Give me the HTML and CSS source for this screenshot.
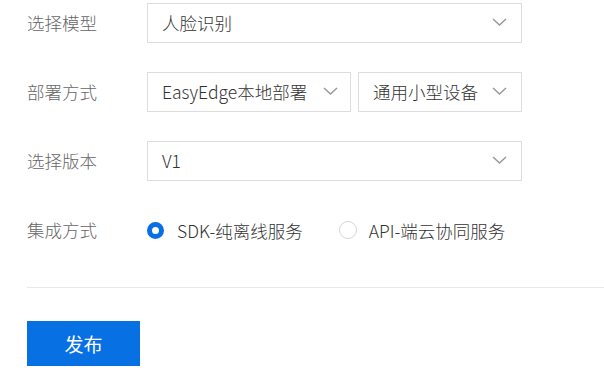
FILE: index.html
```html
<!DOCTYPE html>
<html lang="zh-CN">
<head>
    <meta charset="UTF-8">
    <title>发布模型</title>
    <link rel="stylesheet" href="styles.css">
</head>
<body>
    <div class="publish-form">
        <div class="form-row">
            <div class="form-label">选择模型</div>
            <div class="select select-wide">
                <span>人脸识别</span>
                <svg class="arrow" width="15" height="8" viewBox="0 0 15 8"><path d="M1 1 L7.5 7 L14 1" fill="none" stroke="#999" stroke-width="1.5"/></svg>
            </div>
        </div>
        <div class="form-row">
            <div class="form-label">部署方式</div>
            <div class="select select-mid">
                <span>EasyEdge本地部署</span>
                <svg class="arrow" width="15" height="8" viewBox="0 0 15 8"><path d="M1 1 L7.5 7 L14 1" fill="none" stroke="#999" stroke-width="1.5"/></svg>
            </div>
            <div class="select select-small">
                <span>通用小型设备</span>
                <svg class="arrow" width="15" height="8" viewBox="0 0 15 8"><path d="M1 1 L7.5 7 L14 1" fill="none" stroke="#999" stroke-width="1.5"/></svg>
            </div>
        </div>
        <div class="form-row">
            <div class="form-label">选择版本</div>
            <div class="select select-wide">
                <span>V1</span>
                <svg class="arrow" width="15" height="8" viewBox="0 0 15 8"><path d="M1 1 L7.5 7 L14 1" fill="none" stroke="#999" stroke-width="1.5"/></svg>
            </div>
        </div>
        <div class="form-row">
            <div class="form-label">集成方式</div>
            <label class="radio checked"><span class="radio-dot"></span>SDK-纯离线服务</label>
            <label class="radio"><span class="radio-dot"></span>API-端云协同服务</label>
        </div>
        <div class="divider"></div>
        <button class="btn-primary">发布</button>
    </div>
</body>
</html>
```

FILE: styles.css
```css
html, body {
    margin: 0;
    padding: 0;
    background: #fff;
}

body {
    font-family: "Noto Sans CJK SC", "Noto Sans", sans-serif;
    font-size: 17.5px;
    font-weight: 300;
    color: #333;
}

.publish-form {
    padding: 3px 0 0 27px;
}

.form-row {
    display: flex;
    align-items: center;
    height: 40px;
    margin-bottom: 29px;
    white-space: nowrap;
}

.form-label {
    width: 120px;
    color: #666;
    padding-bottom: 2px;
}

.select {
    box-sizing: border-box;
    height: 40px;
    border: 1px solid #ddd;
    display: flex;
    align-items: center;
    justify-content: space-between;
    padding: 0 14px 2px 14px;
    color: #333;
}

.select-wide {
    width: 375px;
}

.select-mid {
    width: 204px;
    padding-right: 12px;
}

.select-small {
    width: 164px;
    margin-left: 7px;
}

.arrow {
    flex-shrink: 0;
}

.radio {
    display: flex;
    align-items: center;
    color: #333;
    margin-right: 36px;
}

.radio-dot {
    box-sizing: border-box;
    width: 18px;
    height: 18px;
    border-radius: 50%;
    border: 1px solid #d6d6d6;
    margin-right: 12px;
    background: #fff;
}

.radio.checked .radio-dot {
    width: 17px;
    height: 17px;
    border: 5px solid #0a6fe3;
    margin-right: 13px;
}

.divider {
    height: 1px;
    background: #e8e8e8;
    margin: 37px 0 33px;
}

.btn-primary {
    width: 113px;
    height: 45px;
    border: none;
    background: #0770e3;
    color: #fff;
    font-family: "Noto Sans CJK SC", sans-serif;
    font-size: 19px;
    cursor: pointer;
}
```
